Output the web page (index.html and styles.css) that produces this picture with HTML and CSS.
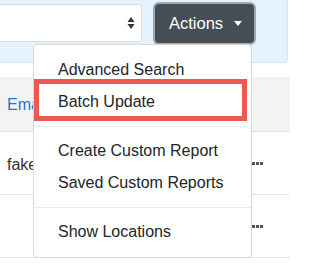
FILE: index.html
```html
<!DOCTYPE html>
<html lang="en">
<head>
    <meta charset="UTF-8">
    <title>Actions menu</title>
    <link rel="stylesheet" href="styles.css">
</head>
<body>

    <div class="page">
        <!-- Filter bar -->
        <div class="panel">
            <div class="select-box">
                <svg class="select-arrows" width="8" height="14" viewBox="0 0 8 14">
                    <path d="M4 1 L7.5 6 H0.5 Z" fill="#333"/>
                    <path d="M4 13 L7.5 8 H0.5 Z" fill="#333"/>
                </svg>
            </div>
            <button class="btn-actions">Actions <span class="caret"></span></button>
        </div>

        <!-- Results table (first column sits behind the open menu) -->
        <div class="table">
            <div class="row head"><a class="cell col-link" href="#">Ema</a></div>
            <div class="row"><span class="cell">fake</span><span class="dots"><i></i><i></i><i></i></span></div>
            <div class="row"><span class="cell"></span><span class="dots"><i></i><i></i><i></i></span></div>
        </div>

        <!-- Dropdown open under the button -->
        <div class="menu">
            <a class="menu-item" href="#">Advanced Search</a>
            <a class="menu-item" href="#">Batch Update</a>
            <div class="divider"></div>
            <a class="menu-item" href="#">Create Custom Report</a>
            <a class="menu-item" href="#">Saved Custom Reports</a>
            <div class="divider"></div>
            <a class="menu-item" href="#">Show Locations</a>
        </div>

        <div class="highlight"></div>
    </div>

</body>
</html>
```

FILE: styles.css
```css
body {
    margin: 0;
    font-family: "Liberation Sans", Arial, sans-serif;
    font-size: 16px;
    color: #212529;
    background-color: #fff;
    overflow: hidden;
}

.page {
    position: relative;
    width: 309px;
    height: 271px;
}

.panel {
    display: flex;
    align-items: flex-start;
    width: 288px;
    height: 63px;
    padding-top: 4px;
    box-sizing: border-box;
    background-color: #e3f2fd;
    border-right: 1px solid #d3e6f4;
    border-bottom: 1px solid #d3e6f4;
    border-bottom-right-radius: 4px;
}

.select-box {
    display: flex;
    align-items: center;
    justify-content: flex-end;
    width: 152px;
    height: 38px;
    margin-left: -10px;
    padding-right: 6px;
    box-sizing: border-box;
    background-color: #fff;
    border: 1px solid #d5dde3;
    border-radius: 4px;
}

.btn-actions {
    display: flex;
    align-items: center;
    width: 99px;
    height: 39px;
    margin-left: 13px;
    padding: 0 0 0 14px;
    border: none;
    border-radius: 4px;
    background-color: #454d55;
    color: #fff;
    font-family: inherit;
    font-size: 16.5px;
    box-shadow: 0 0 0 2px #a0a9b0;
}

.caret {
    display: inline-block;
    margin-left: 11px;
    border-top: 5px solid #fff;
    border-left: 4.5px solid transparent;
    border-right: 4.5px solid transparent;
}

.table {
    width: 290px;
    margin-top: 14px;
}

.row {
    display: flex;
    align-items: center;
    height: 62px;
    border-bottom: 1px solid #e3e3e3;
}

.row.head {
    height: 55px;
    padding-top: 2px;
    box-sizing: border-box;
    background-color: #f3f3f3;
    border-bottom-color: #dedede;
}

.cell {
    margin-left: 7px;
    margin-top: 4px;
    white-space: nowrap;
    color: #333;
}

.col-link {
    margin-top: 0;
    color: #1f74d6;
    text-decoration: none;
}

.dots {
    display: flex;
    gap: 1px;
    margin-left: auto;
    margin-right: 27px;
}

.dots i {
    width: 3px;
    height: 3px;
    background-color: #555;
}

.menu {
    position: absolute;
    left: 33px;
    top: 44px;
    width: 217px;
    padding: 9px 0;
    background-color: #fff;
    border: 1px solid #d8d8d8;
    border-radius: 4px;
}

.menu-item {
    display: block;
    padding: 4px 24px;
    line-height: 24px;
    color: #212529;
    text-decoration: none;
    white-space: nowrap;
}

.divider {
    height: 1px;
    margin: 8px 0;
    background-color: #e9ecef;
}

.highlight {
    position: absolute;
    left: 34px;
    top: 79px;
    width: 213px;
    height: 42px;
    box-sizing: border-box;
    border: 5px solid #ea5a50;
}
```
